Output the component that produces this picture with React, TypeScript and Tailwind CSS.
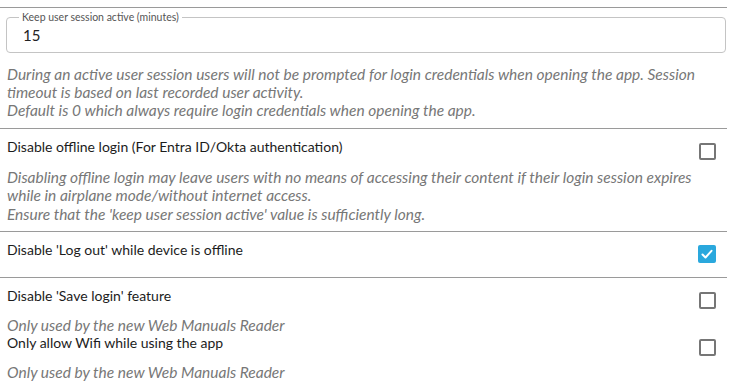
import React from 'react';

function Box({ checked }: { checked?: boolean }) {
  if (checked) {
    return (
      <span className="shrink-0 mt-[4px] mr-[11px] w-[18px] h-[18px] rounded-[2px] bg-[#2aa8dd] flex items-center justify-center">
        <svg width="14" height="14" viewBox="0 0 14 14" fill="none">
          <path d="M2.5 7.5 L5.5 10.5 L11.5 3.8" stroke="#fff" strokeWidth="2" strokeLinecap="round" strokeLinejoin="round" />
        </svg>
      </span>
    );
  }
  return <span className="shrink-0 mt-[5px] mr-[11px] w-[17px] h-[17px] rounded-[2px] border-2 border-[#767676] bg-white" />;
}

function Row({ label, checked }: { label: string; checked?: boolean }) {
  return (
    <div className="h-[18px] flex items-start justify-between pl-[7px]">
      <span className="text-[#1c1c1c] text-[14px] leading-[18px]">{label}</span>
      <Box checked={checked} />
    </div>
  );
}

function Line({ className }: { className: string }) {
  return <div className={`h-px bg-[#9a9a9a] ${className}`} />;
}

export default function App() {
  return (
    <div
      className="w-[733px] h-[390px] bg-white overflow-hidden pr-[6px] text-[14px]"
      style={{ fontFamily: "Lato, 'Open Sans', sans-serif" }}
    >
      <Line className="mt-[7px]" />

      {/* session input */}
      <div className="relative mt-[9px] ml-[6px] mr-[1px] h-[36px] rounded-[4px] border border-[#c4c4c4] flex items-center pl-[16px]">
        <span className="absolute -top-[8px] left-[12px] bg-white px-[3px] text-[10.5px] leading-[14px] text-[#555]">
          Keep user session active (minutes)
        </span>
        <span className="text-[15px] text-[#222]">15</span>
      </div>

      <p className="mt-[12px] pl-[7px] italic text-[#777] text-[15.5px] leading-[18px] whitespace-nowrap">
        During an active user session users will not be prompted for login credentials when opening the app. Session
        <br />
        timeout is based on last recorded user activity.
        <br />
        Default is 0 which always require login credentials when opening the app.
      </p>

      <Line className="mt-[9px]" />

      <div className="mt-[9px]">
        <Row label="Disable offline login (For Entra ID/Okta authentication)" />
      </div>
      <p className="mt-[12px] pl-[7px] italic text-[#777] text-[15.5px] leading-[18.3px] whitespace-nowrap">
        Disabling offline login may leave users with no means of accessing their content if their login session expires
        <br />
        while in airplane mode/without internet access.
        <br />
        Ensure that the 'keep user session active' value is sufficiently long.
      </p>

      <Line className="mt-[8px]" />

      <div className="mt-[9px]">
        <Row label="Disable 'Log out' while device is offline" checked />
      </div>

      <Line className="mt-[18px]" />

      <div className="mt-[9px]">
        <Row label="Disable 'Save login' feature" />
      </div>
      <p className="mt-[11px] pl-[7px] italic text-[#777] text-[15.5px] leading-[18px]">Only used by the new Web Manuals Reader</p>
      <Row label="Only allow Wifi while using the app" />
      <p className="mt-[11px] pl-[7px] italic text-[#777] text-[15.5px] leading-[18px]">Only used by the new Web Manuals Reader</p>
    </div>
  );
}
